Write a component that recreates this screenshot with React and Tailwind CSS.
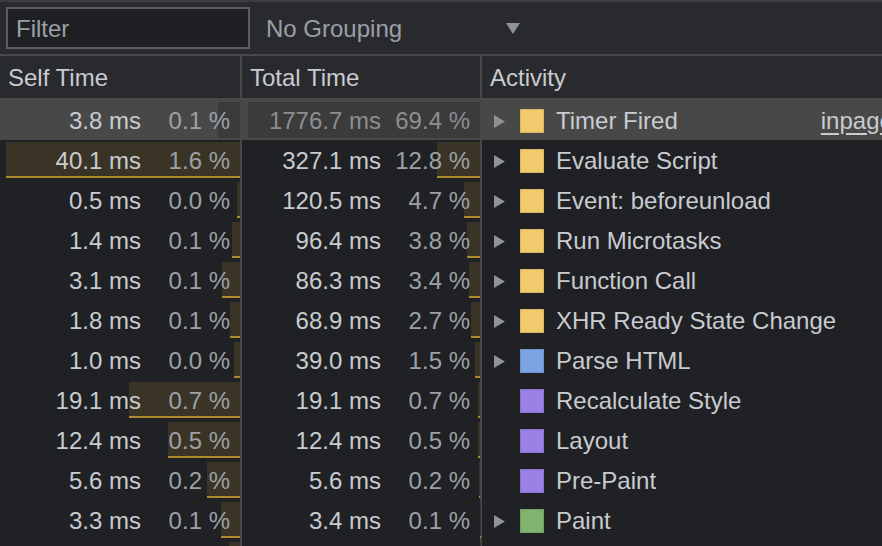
import React from "react";

const YELLOW = "bg-[#f1cb6b]";
const BLUE = "bg-[#7ba3e2]";
const PURPLE = "bg-[#9b80e6]";
const GREEN = "bg-[#82b471]";

const rows = [
  { self: 3.8, selfPct: "0.1", total: 1776.7, totalPct: "69.4", name: "Timer Fired", swatch: YELLOW, expand: true, link: "inpage.js:1", selected: true },
  { self: 40.1, selfPct: "1.6", total: 327.1, totalPct: "12.8", name: "Evaluate Script", swatch: YELLOW, expand: true },
  { self: 0.5, selfPct: "0.0", total: 120.5, totalPct: "4.7", name: "Event: beforeunload", swatch: YELLOW, expand: true },
  { self: 1.4, selfPct: "0.1", total: 96.4, totalPct: "3.8", name: "Run Microtasks", swatch: YELLOW, expand: true },
  { self: 3.1, selfPct: "0.1", total: 86.3, totalPct: "3.4", name: "Function Call", swatch: YELLOW, expand: true },
  { self: 1.8, selfPct: "0.1", total: 68.9, totalPct: "2.7", name: "XHR Ready State Change", swatch: YELLOW, expand: true },
  { self: 1.0, selfPct: "0.0", total: 39.0, totalPct: "1.5", name: "Parse HTML", swatch: BLUE, expand: true },
  { self: 19.1, selfPct: "0.7", total: 19.1, totalPct: "0.7", name: "Recalculate Style", swatch: PURPLE },
  { self: 12.4, selfPct: "0.5", total: 12.4, totalPct: "0.5", name: "Layout", swatch: PURPLE },
  { self: 5.6, selfPct: "0.2", total: 5.6, totalPct: "0.2", name: "Pre-Paint", swatch: PURPLE },
  { self: 3.3, selfPct: "0.1", total: 3.4, totalPct: "0.1", name: "Paint", swatch: GREEN, expand: true },
  // next row only peeks in at the bottom edge, its bars show but no text
  { self: 1.9, selfPct: "0.1", total: 1.9, totalPct: "0.1", name: "", swatch: PURPLE, partial: true },
];

const MAX_SELF = 40.1;
const MAX_TOTAL = 1776.7;

function TimeCell({ value, pct, max, selected, dim, partial, className }) {
  return (
    <div className={`relative h-full shrink-0 border-r-2 border-[#46484c] ${className}`}>
      {/* bar sits under the numbers */}
      <div className="absolute inset-y-0 left-[6px] right-0">
        <div
          className={`absolute right-0 top-[2px] bottom-[2px] ${
            selected ? "bg-[#3b3b3c]" : "bg-[#3a3426] border-b-2 border-[#b08a2e]"
          }`}
          style={{ width: `${(value / max) * 100}%` }}
        />
      </div>
      {!partial && (
        <div className={`relative flex h-full items-center justify-end pt-[2px] pr-[10px] ${dim ? "text-[#8c8e91]" : ""}`}>
          <span className={dim ? "" : "text-[#c8cbcf]"}>{value.toFixed(1)} ms</span>
          <span className={`w-[89px] text-right ${dim ? "" : "text-[#9da1a6]"}`}>{pct} %</span>
        </div>
      )}
    </div>
  );
}

function Row({ row }) {
  return (
    <div className={`flex h-[40px] ${row.selected ? "bg-[#484848]" : ""}`}>
      <TimeCell className="w-[242px]" value={row.self} pct={row.selfPct} max={MAX_SELF} selected={row.selected} partial={row.partial} />
      <TimeCell className="w-[240px]" value={row.total} pct={row.totalPct} max={MAX_TOTAL} selected={row.selected} dim={row.selected} partial={row.partial} />
      {!row.partial && (
        <div className="flex min-w-0 flex-1 items-center pt-[2px] pl-[12px] text-[#c8cbcf]">
          <div className="w-[11px] shrink-0">
            {row.expand && (
              <svg width="11" height="13" viewBox="0 0 11 13">
                <polygon points="0,0 11,6.5 0,13" fill="#8f9296" />
              </svg>
            )}
          </div>
          <div className={`ml-[15px] h-[24px] w-[24px] shrink-0 border border-black/10 ${row.swatch}`} />
          <span className="ml-[12px] whitespace-nowrap">{row.name}</span>
          {row.link && (
            <span className="ml-[143px] shrink-0 whitespace-nowrap underline underline-offset-4">
              {row.link}
            </span>
          )}
        </div>
      )}
    </div>
  );
}

export default function App() {
  return (
    <div className="h-[546px] w-[882px] overflow-hidden bg-[#202124] font-['Liberation_Sans',Arial,sans-serif] text-[24px] leading-none">
      {/* Toolbar */}
      <div className="flex h-[56px] items-center border-t-2 border-b-2 border-t-[#3d3e42] border-b-[#46484b] bg-[#292a2d]">
        <div className="ml-[6px] flex h-[42px] w-[244px] items-center border-2 border-[#5b5d61] bg-[#1f2023] pt-[2px] pl-[8px] text-[#9aa0a6]">
          Filter
        </div>
        <div className="ml-[16px] flex items-center text-[#9aa0a6]">
          <span className="w-[240px] pt-[2px]">No Grouping</span>
          <svg width="14" height="11" viewBox="0 0 14 11">
            <polygon points="0,0 14,0 7,11" fill="#8f9296" />
          </svg>
        </div>
      </div>

      {/* Header */}
      <div className="flex h-[44px] border-b-2 border-[#4a4a4b] bg-[#292a2d] text-[#c8cbcf]">
        <div className="flex w-[242px] items-center border-r-2 border-[#46484c] pt-[2px] pl-[8px]">Self Time</div>
        <div className="flex w-[240px] items-center border-r-2 border-[#46484c] pt-[2px] pl-[8px]">Total Time</div>
        <div className="flex flex-1 items-center pt-[2px] pl-[8px]">Activity</div>
      </div>

      {rows.map((row, i) => (
        <Row key={i} row={row} />
      ))}
    </div>
  );
}
